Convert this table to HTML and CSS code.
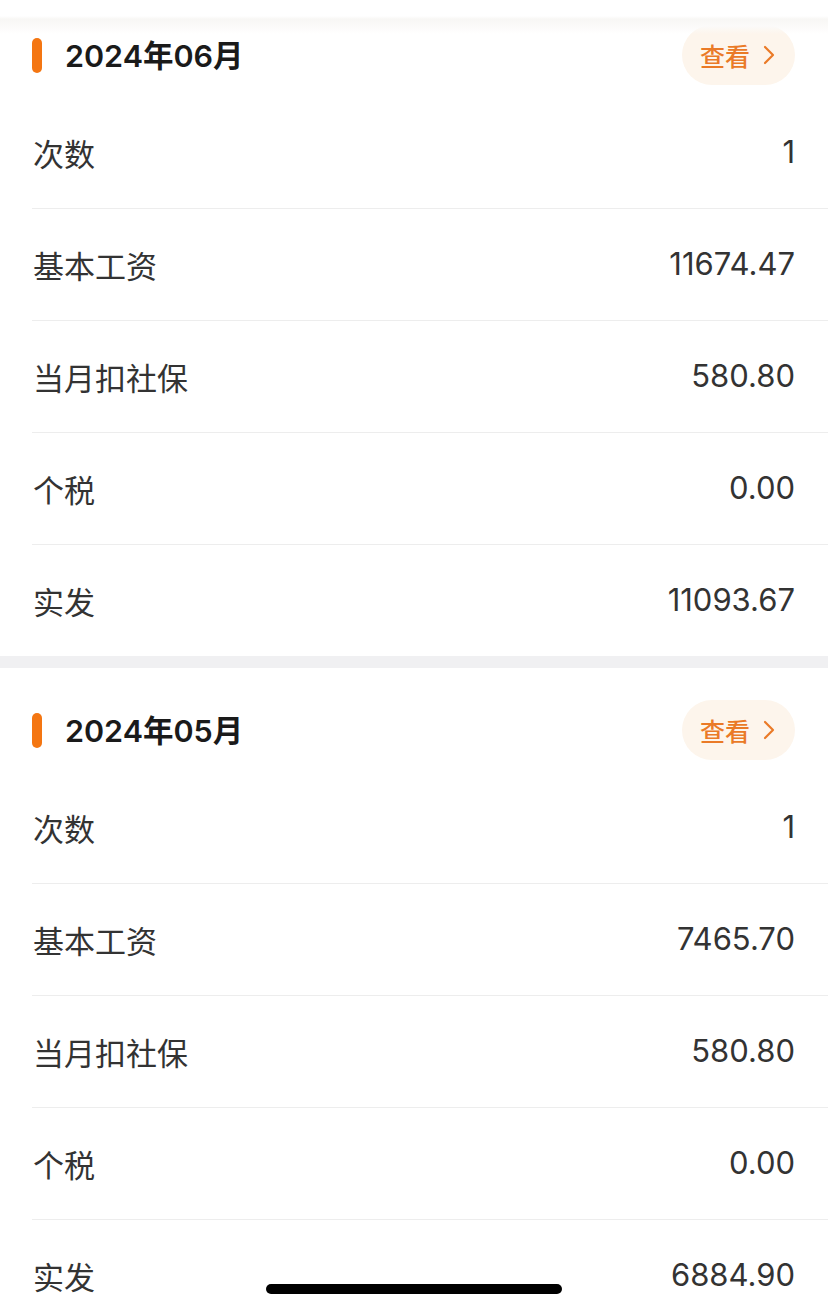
FILE: index.html
```html
<!DOCTYPE html>
<html lang="zh-CN">
<head>
<meta charset="utf-8">
<title>工资明细</title>
<link rel="stylesheet" href="styles.css">
</head>
<body>
<div class="top-shade"></div>
<div class="list">
  <section class="card">
    <div class="card-head">
      <div class="title"><span class="bar"></span><span class="title-text">2024年06月</span></div>
      <a class="view-btn">查看<svg class="chev" width="12" height="20" viewBox="0 0 12 20"><path d="M2 2 L10 10 L2 18" fill="none" stroke="currentColor" stroke-width="2.2" stroke-linecap="round" stroke-linejoin="round"/></svg></a>
    </div>
    <div class="row"><span class="label">次数</span><span class="value">1</span></div>
    <div class="row"><span class="label">基本工资</span><span class="value">11674.47</span></div>
    <div class="row"><span class="label">当月扣社保</span><span class="value">580.80</span></div>
    <div class="row"><span class="label">个税</span><span class="value">0.00</span></div>
    <div class="row"><span class="label">实发</span><span class="value">11093.67</span></div>
  </section>
  <section class="card">
    <div class="card-head">
      <div class="title"><span class="bar"></span><span class="title-text">2024年05月</span></div>
      <a class="view-btn">查看<svg class="chev" width="12" height="20" viewBox="0 0 12 20"><path d="M2 2 L10 10 L2 18" fill="none" stroke="currentColor" stroke-width="2.2" stroke-linecap="round" stroke-linejoin="round"/></svg></a>
    </div>
    <div class="row"><span class="label">次数</span><span class="value">1</span></div>
    <div class="row"><span class="label">基本工资</span><span class="value">7465.70</span></div>
    <div class="row"><span class="label">当月扣社保</span><span class="value">580.80</span></div>
    <div class="row"><span class="label">个税</span><span class="value">0.00</span></div>
    <div class="row"><span class="label">实发</span><span class="value">6884.90</span></div>
  </section>
</div>
<div class="home-indicator"></div>
</body>
</html>
```

FILE: styles.css
```css
html, body {
  margin: 0;
  padding: 0;
}
body {
  width: 828px;
  height: 1310px;
  overflow: hidden;
  background: #f0f0f2;
  font-family: "Liberation Sans", "Noto Sans CJK SC", sans-serif;
  position: relative;
}
.top-shade {
  position: absolute;
  left: 0;
  top: 0;
  width: 828px;
  height: 34px;
  background: linear-gradient(to bottom, #ffffff 0px, #ffffff 16px, #f8f7f5 19px, #fbfaf9 26px, rgba(255,255,255,0) 34px);
  z-index: 2;
}
.list {
  margin-top: -7px;
  display: flex;
  flex-direction: column;
  gap: 12px;
}
.card {
  background: #ffffff;
  padding-top: 32px;
  padding-left: 32px;
}
.card-head {
  display: flex;
  align-items: center;
  justify-content: space-between;
  height: 60px;
  margin-bottom: 12px;
  padding-right: 33px;
}
.title {
  display: flex;
  align-items: center;
}
.bar {
  width: 10px;
  height: 35px;
  border-radius: 5px;
  background: #f47612;
  margin-right: 23px;
}
.title-text {
  font-family: "Inter", "Noto Sans CJK SC", sans-serif;
  font-size: 30.5px;
  font-weight: 600;
  color: #1a1a1a;
  margin-top: -3px;
}
.view-btn {
  display: flex;
  align-items: center;
  justify-content: center;
  width: 113px;
  height: 60px;
  border-radius: 30px;
  background: #fdf5ec;
  color: #ea7a27;
  font-family: "Noto Sans CJK SC", sans-serif;
  font-size: 25px;
  font-weight: 500;
  gap: 13px;
  padding-right: 2px;
  box-sizing: border-box;
}
.chev {
  display: block;
}
.row {
  display: flex;
  align-items: center;
  justify-content: space-between;
  height: 111px;
  padding-right: 33px;
  border-bottom: 1px solid #ededed;
}
.row:last-child {
  border-bottom: none;
}
.label {
  font-size: 31px;
  color: #333333;
  padding-left: 1px;
}
.value {
  font-family: "Inter", "Liberation Sans", sans-serif;
  font-size: 31px;
  color: #333333;
  margin-top: -2px;
}
.home-indicator {
  position: absolute;
  left: 266px;
  top: 1284px;
  width: 296px;
  height: 10px;
  border-radius: 5px;
  background: #000000;
}
```
